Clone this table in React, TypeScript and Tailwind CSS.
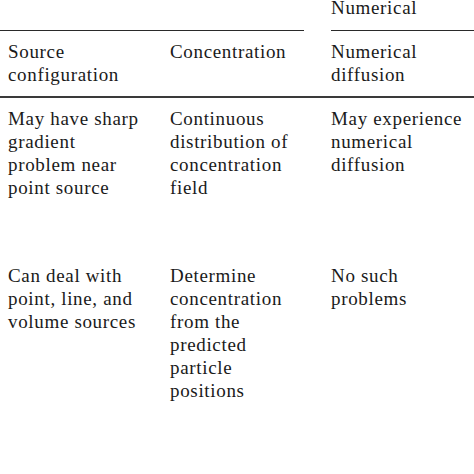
const rows: string[][][] = [
  [
    ['May have sharp', 'gradient', 'problem near', 'point source'],
    ['Continuous', 'distribution of', 'concentration', 'field'],
    ['May experience', 'numerical', 'diffusion'],
  ],
  [
    ['Can deal with', 'point, line, and', 'volume sources'],
    ['Determine', 'concentration', 'from the', 'predicted', 'particle', 'positions'],
    ['No such', 'problems'],
  ],
];

const Lines = ({ lines }: { lines: string[] }) => (
  <>
    {lines.map((l, i) => (
      <div key={i} className="whitespace-nowrap">{l}</div>
    ))}
  </>
);

const App = () => {
  return (
    <div className="w-[474px] h-[474px] overflow-hidden bg-white text-[#1a1a1a] text-[19px] leading-[23px] tracking-[0.035em] font-['Liberation_Serif',_serif]">
      {/* Group header */}
      <div className="grid grid-cols-[331px_1fr] -mt-[4px] h-[34px]">
        <div />
        <div>Numerical</div>
      </div>
      <div className="flex">
        <div className="w-[304px] border-t border-[#2a2a2a]" />
        <div className="flex-1 ml-[27px] border-t border-[#2a2a2a]" />
      </div>

      {/* Column headers */}
      <div className="grid grid-cols-[170px_161px_1fr] pt-[9px] pb-[10px] border-b-2 border-[#3a3a3a]">
        <div className="pl-2"><Lines lines={['Source', 'configuration']} /></div>
        <div><Lines lines={['Concentration']} /></div>
        <div><Lines lines={['Numerical', 'diffusion']} /></div>
      </div>

      {/* Body */}
      {rows.map((row, i) => (
        <div key={i} className="grid grid-cols-[170px_161px_1fr] pt-[9px] pb-[56px]">
          <div className="pl-2"><Lines lines={row[0]} /></div>
          <div><Lines lines={row[1]} /></div>
          <div><Lines lines={row[2]} /></div>
        </div>
      ))}
    </div>
  );
};

export default App;
